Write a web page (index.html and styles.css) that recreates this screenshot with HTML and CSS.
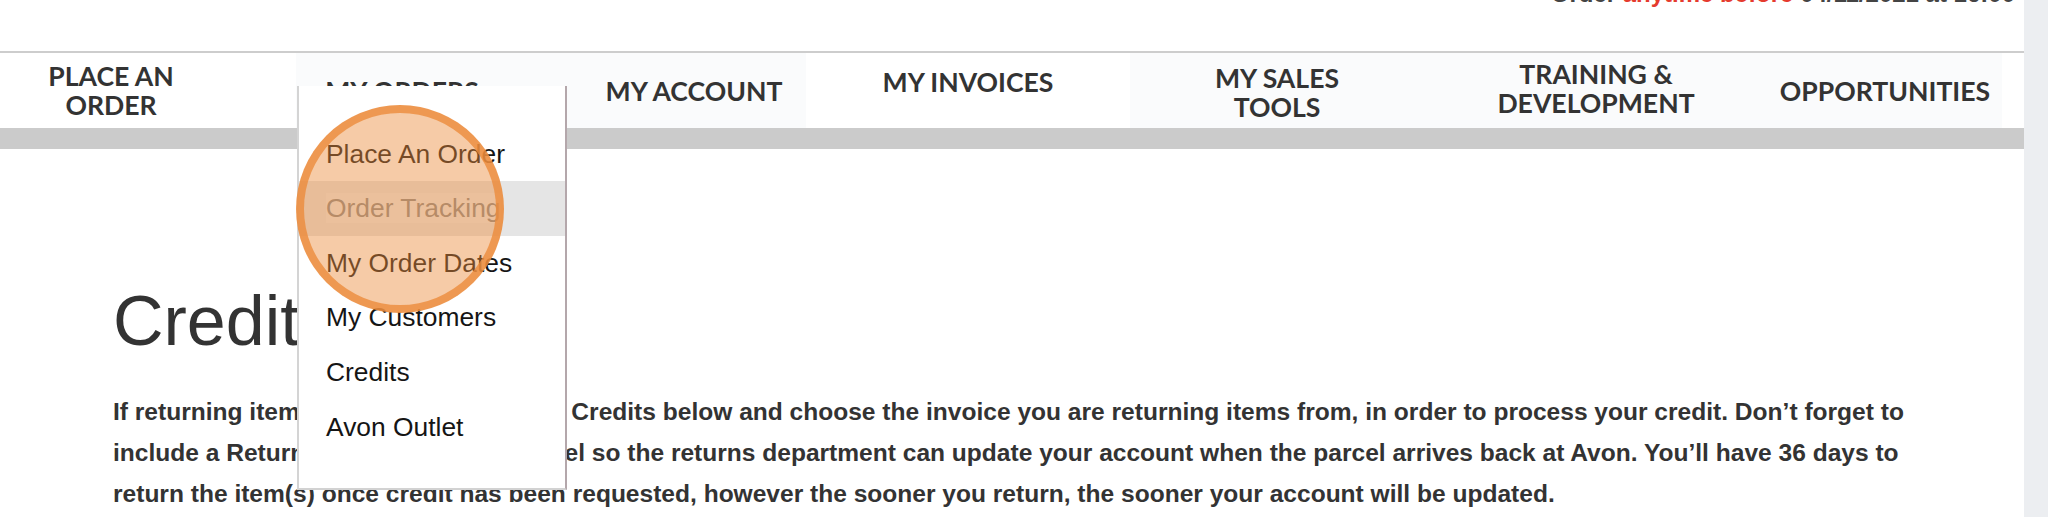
FILE: index.html
```html
<!DOCTYPE html>
<html lang="en">
<head>
<meta charset="utf-8">
<title>Credits</title>
<link rel="stylesheet" href="styles.css">
</head>
<body>
<div class="page">
  <div class="main">
    <header class="topbar">
      <p class="cutoff">Order <span class="hl">anytime before</span> 04/11/2021 at 16:00</p>
    </header>
    <nav class="nav">
      <div class="nav-item n1">PLACE AN<br>ORDER</div>
      <div class="nav-item n2 tint">MY ORDERS</div>
      <div class="nav-item n3 tint">MY ACCOUNT</div>
      <div class="nav-item n4">MY INVOICES</div>
      <div class="nav-item n5 tint">MY SALES<br>TOOLS</div>
      <div class="nav-item n6 tint">TRAINING &amp;<br>DEVELOPMENT</div>
      <div class="nav-item n7 tint">OPPORTUNITIES</div>
    </nav>
    <div class="strip"></div>
    <section class="content">
      <h1 class="title">Credits</h1>
      <p class="intro">If returning items back, please click on Credits below and choose the invoice you are returning items from, in order to process your credit. Don’t forget to<br>include a Returns Label with your parcel so the returns department can update your account when the parcel arrives back at Avon. You’ll have 36 days to<br>return the item(s) once credit has been requested, however the sooner you return, the sooner your account will be updated.</p>
    </section>
    <div class="dropdown">
      <ul class="menu">
        <li class="menu-item">Place An Order</li>
        <li class="menu-item active"><span class="menu-link">Order Tracking</span></li>
        <li class="menu-item">My Order Dates</li>
        <li class="menu-item">My Customers</li>
        <li class="menu-item">Credits</li>
        <li class="menu-item">Avon Outlet</li>
      </ul>
    </div>
    <div class="spot"></div>
  </div>
  <div class="scrollbar"></div>
</div>
</body>
</html>
```
FILE: styles.css
```css
html, body {
  margin: 0;
  padding: 0;
  height: 517px;
  overflow: hidden;
  background: #ffffff;
}

.page {
  display: flex;
  width: 2048px;
  height: 517px;
}

.main {
  position: relative;
  flex: none;
  width: 2024px;
  height: 517px;
  overflow: hidden;
  background: #ffffff;
}

.scrollbar {
  flex: 1;
  background: #eceef1;
}

.topbar {
  height: 51px;
  border-bottom: 2px solid #cdcdcd;
  overflow: hidden;
  display: flex;
  justify-content: flex-end;
}

.cutoff {
  margin: -20px 9px 0 0;
  font: bold 24px/27.6px "Liberation Sans", Arial, sans-serif;
  color: #444444;
  white-space: nowrap;
}

.hl {
  color: #e53b2e;
}

.nav {
  display: flex;
  align-items: stretch;
  height: 75px;
  font-family: Lato, "Open Sans", sans-serif;
  font-weight: 700;
  font-size: 26.6px;
  line-height: 29px;
  color: #333333;
  text-align: center;
}

.nav-item {
  flex: none;
  box-sizing: border-box;
}

.tint {
  background: #fafbfc;
}

.n1 { width: 296px; padding: 9px 74px 0 0; }
.n2 { width: 286px; padding: 24px 74px 0 0; }
.n3 { width: 224px; padding-top: 23.5px; }
.n4 { width: 324px; padding-top: 14.5px; }
.n5 { width: 294px; padding-top: 10.5px; }
.n6 { width: 344px; padding-top: 6.5px; }
.n7 { width: 234px; padding-top: 23.5px; }

.strip {
  height: 21px;
  background: #cbcbcb;
}

.content {
  padding: 136.7px 0 0 113px;
  color: #333333;
  font-family: "Liberation Sans", Arial, Helvetica, sans-serif;
}

.title {
  margin: 0;
  font-size: 70px;
  line-height: 70px;
  font-weight: 400;
}

.intro {
  margin: 35px 0 0;
  font-size: 24.56px;
  line-height: 41px;
  font-weight: 700;
  white-space: nowrap;
}

.dropdown {
  position: absolute;
  left: 297px;
  top: 86px;
  width: 270px;
  height: 404px;
  box-sizing: border-box;
  background: #ffffff;
  border-left: 2px solid #d4d4d4;
  border-right: 2px solid #b4a7ab;
  border-bottom: 2px solid #d2d2d2;
  font-family: "Liberation Sans", Arial, Helvetica, sans-serif;
  font-size: 26.4px;
  color: #151515;
}

.menu {
  list-style: none;
  margin: 0;
  padding: 40.7px 0 0;
}

.menu-item {
  height: 54.6px;
  line-height: 54.6px;
  padding-left: 27px;
  white-space: nowrap;
}

.menu-item.active {
  background: #e5e5e5;
  color: #8a8a8a;
}

.menu-link {
  background: #ececec;
}

.spot {
  position: absolute;
  left: 296px;
  top: 105px;
  width: 208px;
  height: 208px;
  box-sizing: border-box;
  border-radius: 50%;
  border: 8px solid rgba(236, 140, 60, 0.8);
  background: rgba(236, 140, 60, 0.45);
}
```
